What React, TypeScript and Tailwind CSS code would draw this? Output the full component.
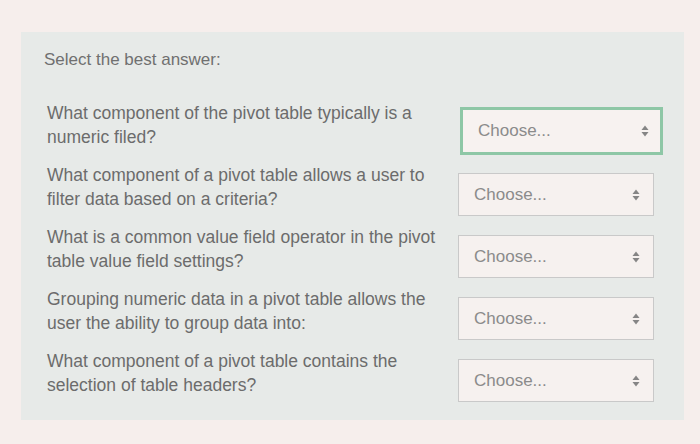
import React from "react";

const questions: string[][] = [
  ["What component of the pivot table typically is a", "numeric filed?"],
  ["What component of a pivot table allows a user to", "filter data based on a criteria?"],
  ["What is a common value field operator in the pivot", "table value field settings?"],
  ["Grouping numeric data in a pivot table allows the", "user the ability to group data into:"],
  ["What component of a pivot table contains the", "selection of table headers?"],
];

function Arrows() {
  return (
    <svg width="8" height="12" viewBox="0 0 8 12" className="shrink-0">
      <path d="M4 0.5 L7.5 5 L0.5 5 Z" fill="#858585" />
      <path d="M4 11.5 L7.5 7 L0.5 7 Z" fill="#858585" />
    </svg>
  );
}

function SelectBox({ focused }: { focused: boolean }) {
  if (focused) {
    return (
      <div className="mt-[6px] ml-[2px] w-[203px] h-[48px] shrink-0 border-[3px] border-[#8ec7a6] bg-[#f7f2f0] flex items-center pl-[15px] pr-[11px] justify-between">
        <span className="text-[17px] text-[#8b8b8b]">Choose...</span>
        <Arrows />
      </div>
    );
  }
  return (
    <div className="mt-[10px] w-[196px] h-[43px] shrink-0 border border-[#c9c9c9] bg-[#f6f1ef] flex items-center pl-[15px] pr-[13px] justify-between">
      <span className="text-[17px] text-[#8b8b8b]">Choose...</span>
      <Arrows />
    </div>
  );
}

export default function App() {
  return (
    <div
      className="w-[700px] h-[444px] bg-[#f6eeec] pt-[32px] pl-[21px] overflow-hidden"
      style={{ fontFamily: "'Liberation Sans', Arial, sans-serif" }}
    >
      <div className="w-[663px] h-[388px] bg-[#e7eae8] pt-[16px] pl-[23px]">
        <div className="text-[17px] leading-[24px] text-[#707070]">Select the best answer:</div>
        <div className="mt-[29px] flex flex-col gap-[13px]">
          {questions.map((q, i) => (
            <div key={i} className="flex items-start h-[49px]">
              <div className="w-[414px] shrink-0 pl-[3px] text-[17.5px] leading-[24px] text-[#6c6c6c] whitespace-nowrap">
                <div>{q[0]}</div>
                <div>{q[1]}</div>
              </div>
              <SelectBox focused={i === 0} />
            </div>
          ))}
        </div>
      </div>
    </div>
  );
}
